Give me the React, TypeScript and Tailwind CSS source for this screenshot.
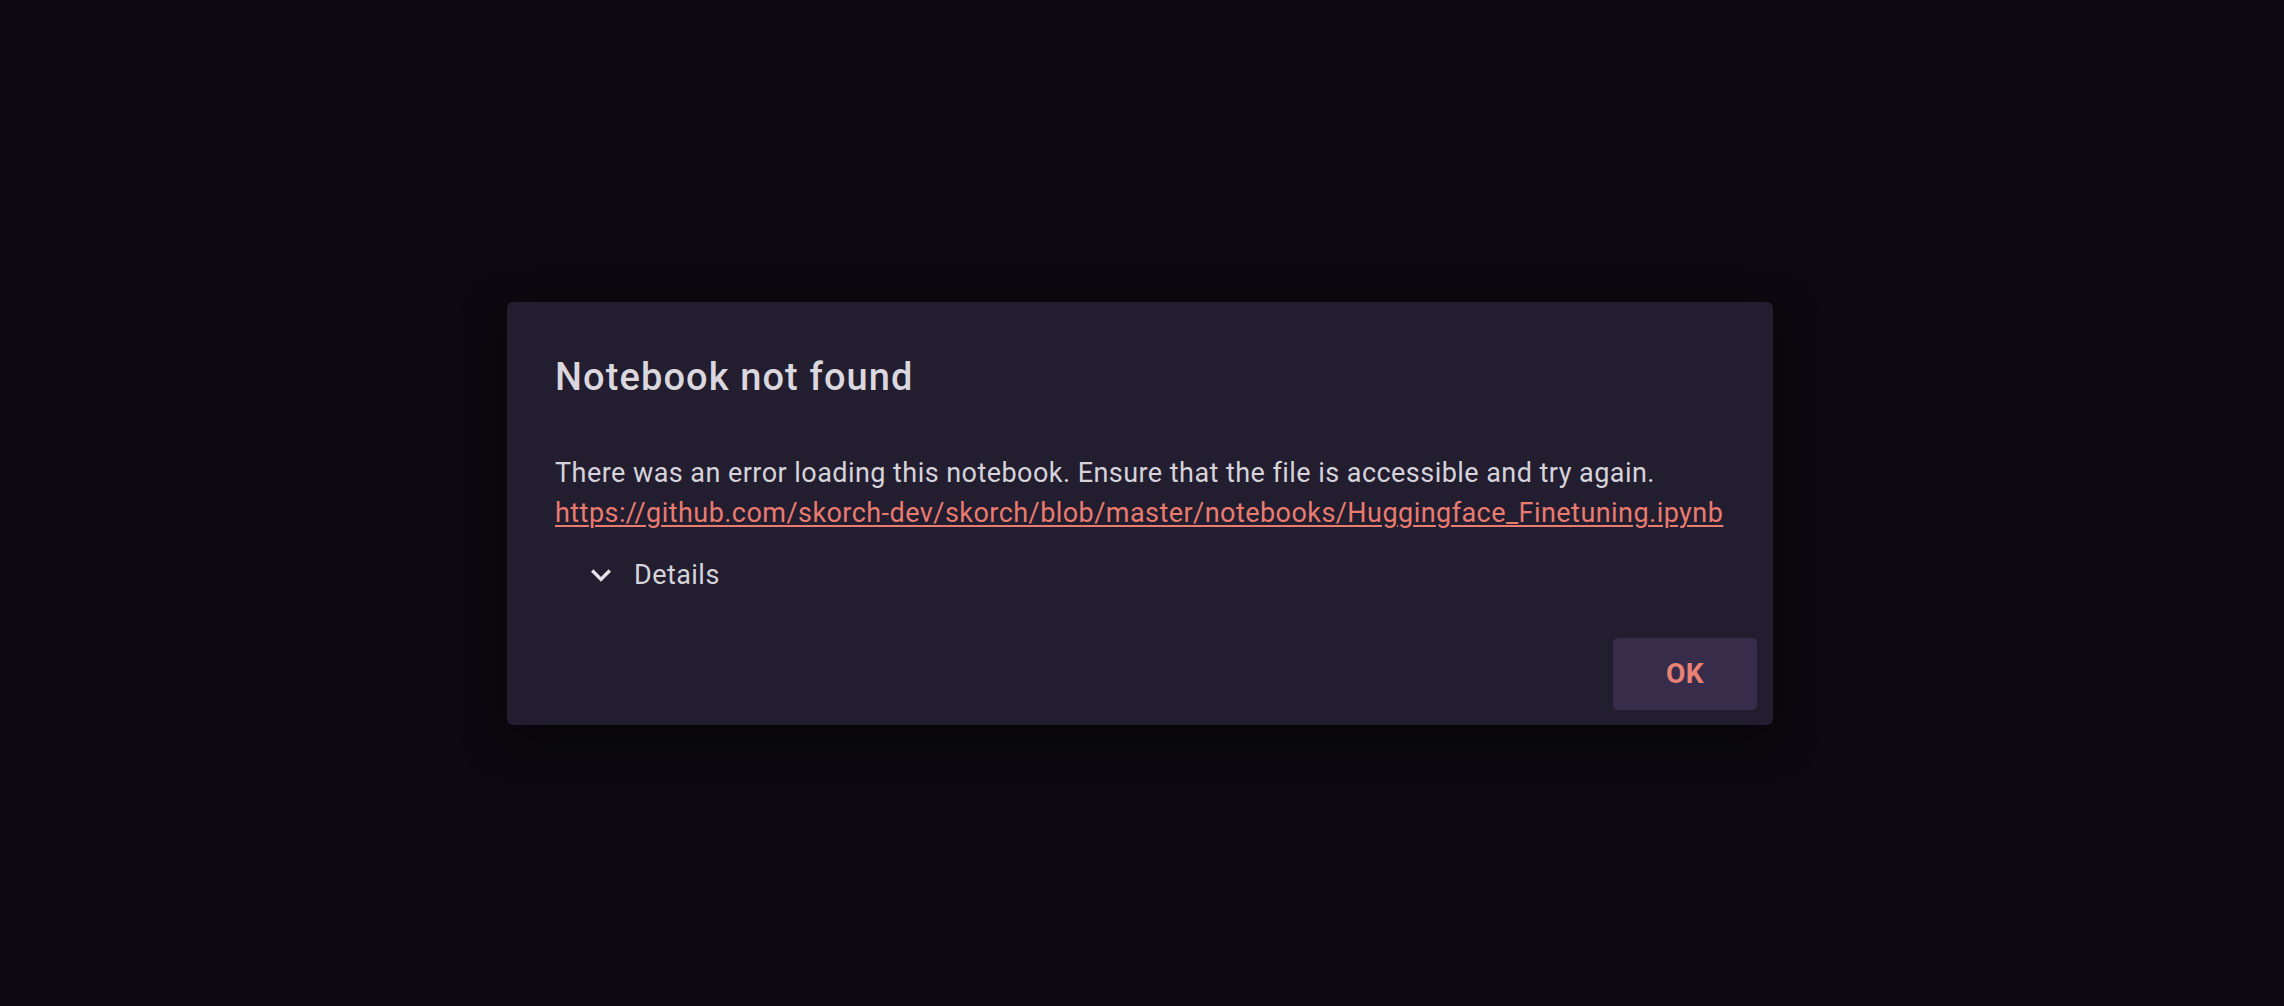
import React from 'react';

const ExpandMore = () => (
  <svg width="40" height="40" viewBox="0 0 24 24" fill="currentColor" aria-hidden="true">
    <path d="M16.59 8.59L12 13.17 7.41 8.59 6 10l6 6 6-6z" />
  </svg>
);

export default function App() {
  const url = 'https://github.com/skorch-dev/skorch/blob/master/notebooks/Huggingface_Finetuning.ipynb';

  return (
    <div className="min-h-screen w-full bg-[#0c0a10] flex items-center justify-center pt-[20px] pr-[4px] font-['Roboto','Liberation_Sans',sans-serif]">
      <div className="w-[1266px] bg-[#221d2f] rounded-[6px] shadow-[0_12px_40px_rgba(0,0,0,0.55)] flex flex-col">
        {/* Content */}
        <div className="px-[48px] pt-[51px]">
          <h2 className="text-[38px] leading-[48px] font-medium tracking-[1.1px] text-[#dad7de]">Notebook not found</h2>
          <div className="mt-[52px] text-[27px] leading-[40px] tracking-[0.45px] text-[#d6d3db]">
            <p className="whitespace-nowrap">There was an error loading this notebook. Ensure that the file is accessible and try again.</p>
            <a href="#" className="block whitespace-nowrap text-[#e97b6f] underline underline-offset-[3px] decoration-[1.5px]">
              {url}
            </a>
          </div>
          <button className="mt-[22px] ml-[26px] flex items-center gap-[13px] text-[#d6d3db]">
            <span className="text-[#e4e1e8] -my-[4px]"><ExpandMore /></span>
            <span className="text-[27px] leading-[40px] tracking-[0.45px]">Details</span>
          </button>
        </div>

        {/* Actions */}
        <div className="flex justify-end px-[16px] pb-[15px] pt-[43px]">
          <button className="w-[144px] h-[72px] rounded-[5px] bg-[#372d4b] text-[#ea8175] text-[28px] font-bold tracking-[0.5px]">
            OK
          </button>
        </div>
      </div>
    </div>
  );
}
